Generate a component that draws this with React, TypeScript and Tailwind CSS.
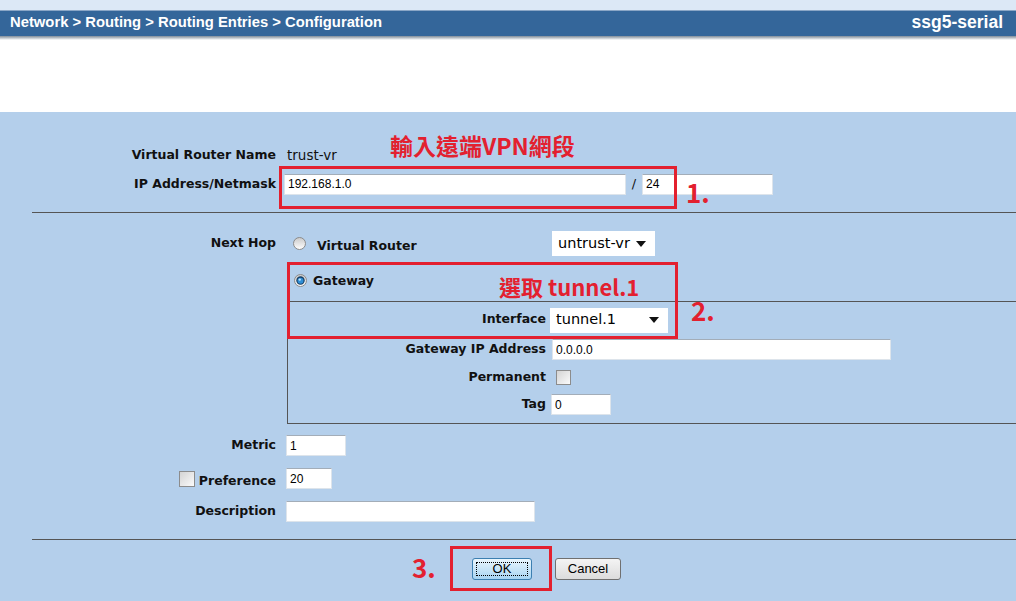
import React from 'react';

const redText = "text-[#e3202f] font-bold font-['Noto_Sans_CJK_TC','Noto_Sans',sans-serif] leading-none";

const Radio = ({ checked = false }: { checked?: boolean }) => (
  <svg width="13" height="13" viewBox="0 0 13 13" className="shrink-0">
    <defs>
      <linearGradient id={checked ? 'rg-on' : 'rg-off'} x1="0" y1="0" x2="0" y2="1">
        <stop offset="0" stopColor="#c9c9c9" />
        <stop offset="1" stopColor="#ffffff" />
      </linearGradient>
    </defs>
    <circle cx="6.5" cy="6.5" r="6" fill={`url(#${checked ? 'rg-on' : 'rg-off'})`} stroke="#8a8a8a" />
    {checked && (
      <>
        <circle cx="6.5" cy="6.5" r="4.2" fill="#173f66" />
        <circle cx="6.5" cy="6.8" r="3" fill="#2f8fd6" />
        <circle cx="5.8" cy="5.6" r="1.2" fill="#bfe3ff" />
      </>
    )}
  </svg>
);

const Checkbox = ({ size = 15 }: { size?: number }) => (
  <div
    className="shrink-0 border border-[#8c8c8c] bg-gradient-to-br from-[#d4d4d4] to-[#fbfbfb]"
    style={{ width: size, height: size }}
  />
);

const Field = ({ value = '', className = '' }: { value?: string; className?: string }) => (
  <input
    readOnly
    value={value}
    className={`h-[21px] bg-white border border-[#dde4eb] border-t-[#a3adb8] px-[3px] text-[12px] text-black font-['Liberation_Sans',Arial,sans-serif] outline-none ${className}`}
  />
);

const Select = ({ value, className = '' }: { value: string; className?: string }) => (
  <div className={`h-[25px] bg-white flex items-center justify-between pl-[6px] pr-[9px] text-[14.5px] font-normal text-black ${className}`}>
    <span>{value}</span>
    <svg width="10" height="6" viewBox="0 0 10 6">
      <path d="M0 0h10L5 6z" fill="#111" />
    </svg>
  </div>
);

const Row = ({
  label,
  width = 276,
  className = '',
  children,
}: {
  label: React.ReactNode;
  width?: number;
  className?: string;
  children?: React.ReactNode;
}) => (
  <div className={`flex items-center ${className}`}>
    <div className="shrink-0 text-right font-bold text-[12.5px]" style={{ width }}>
      {label}
    </div>
    {children}
  </div>
);

export default function App() {
  return (
    <div className="w-[1016px] h-[601px] flex flex-col overflow-hidden bg-[#b4cfeb] text-[#111] font-['DejaVu_Sans',Verdana,sans-serif]">
      {/* top bar */}
      <div className="h-[10px] shrink-0 bg-[#dce8f6]" />
      <div className="h-[26px] shrink-0 bg-[#34669a] border-t border-[#8aa6c6] flex items-center justify-between pl-[10px] pr-[13px] pb-[2px] text-white font-bold font-['Liberation_Sans',Arial,sans-serif]">
        <span className="text-[14.8px]">Network &gt; Routing &gt; Routing Entries &gt; Configuration</span>
        <span className="text-[17.5px]">ssg5-serial</span>
      </div>
      <div className="h-[4px] shrink-0 bg-gradient-to-b from-[#7f8c99] to-white" />
      <div className="h-[72px] shrink-0 bg-white" />

      {/* form panel */}
      <div className="relative flex-1 pt-[29px]">
        <Row label="Virtual Router Name" className="h-[28px]">
          <span className="ml-[11px] text-[13.5px] font-normal">trust-vr</span>
        </Row>
        <Row label="IP Address/Netmask" className="h-[30px]">
          <Field value="192.168.1.0" className="ml-[8px] w-[342px]" />
          <span className="w-[16px] text-center text-[13px] font-normal">/</span>
          <Field value="24" className="w-[131px]" />
        </Row>

        <div className="mt-[13px] ml-[32px] h-px bg-[#555]" />

        <Row label="Next Hop" className="mt-[16px] h-[28px]">
          <div className="w-[276px] flex items-center">
            <div className="ml-[17px]">
              <Radio />
            </div>
            <span className="ml-[11px] mt-[6px] font-bold text-[12.5px]">Virtual Router</span>
          </div>
          <Select value="untrust-vr" className="mt-px w-[103px]" />
        </Row>
        <div className="h-[44px] flex items-center pt-[2px] pl-[294px]">
          <Radio checked />
          <span className="ml-[6px] mt-[3px] font-bold text-[12.5px]">Gateway</span>
        </div>

        {/* gateway details */}
        <div className="ml-[287px] border-y border-l border-[#555] pb-[5px]">
          <Row label="Interface" width={258} className="h-[34px]">
            <Select value="tunnel.1" className="ml-[4px] mt-[2px] w-[118px]" />
          </Row>
          <Row label="Gateway IP Address" width={258} className="h-[27px]">
            <Field value="0.0.0.0" className="ml-[6px] w-[339px]" />
          </Row>
          <Row label="Permanent" width={258} className="h-[28px]">
            <div className="ml-[10px]">
              <Checkbox />
            </div>
          </Row>
          <Row label="Tag" width={258} className="h-[27px]">
            <Field value="0" className="ml-[5px] w-[60px]" />
          </Row>
        </div>

        <Row label="Metric" className="mt-[7px] h-[29px]">
          <Field value="1" className="ml-[10px] w-[60px]" />
        </Row>
        <Row
          label={
            <div className="flex items-center justify-end">
              <Checkbox size={16} />
              <span className="ml-[4px] mt-[6px]">Preference</span>
            </div>
          }
          className="mt-[4px] h-[29px]"
        >
          <Field value="20" className="ml-[10px] w-[46px]" />
        </Row>
        <Row label="Description" className="mt-[4px] h-[29px]">
          <Field className="ml-[10px] w-[249px]" />
        </Row>

        <div className="mt-[13px] ml-[32px] h-px bg-[#555]" />

        <div className="mt-[18px] flex pl-[472px] gap-[23px] font-['Liberation_Sans',Arial,sans-serif] text-[13px] text-black">
          <button className="relative w-[60px] h-[22px] rounded-[3px] border border-[#3c7fb1] bg-gradient-to-b from-[#eaf6fd] to-[#a7d4f2]">
            <span className="absolute inset-[3px] border border-dotted border-black" />
            OK
          </button>
          <button className="w-[66px] h-[22px] rounded-[3px] border border-[#707070] bg-gradient-to-b from-[#f4f4f4] to-[#dcdcdc]">
            Cancel
          </button>
        </div>

        {/* annotations */}
        <div className="absolute left-[279px] top-[54px] w-[398px] h-[43px] border-[3px] border-[#e3202f]" />
        <div className="absolute left-[287px] top-[150px] w-[391px] h-[77px] border-[3px] border-[#e3202f]" />
        <div className="absolute left-[450px] top-[434px] w-[102px] h-[45px] border-[3px] border-[#e3202f]" />

        <div className={`absolute left-[390px] top-[22px] text-[23px] ${redText}`}>輸入遠端VPN網段</div>
        <div className={`absolute left-[499px] top-[163px] text-[22px] ${redText}`}>選取 tunnel.1</div>
        <div className={`absolute left-[686px] top-[67px] text-[26px] ${redText}`}>1.</div>
        <div className={`absolute left-[691px] top-[185px] text-[26px] ${redText}`}>2.</div>
        <div className={`absolute left-[412px] top-[442px] text-[26px] ${redText}`}>3.</div>
      </div>
    </div>
  );
}
